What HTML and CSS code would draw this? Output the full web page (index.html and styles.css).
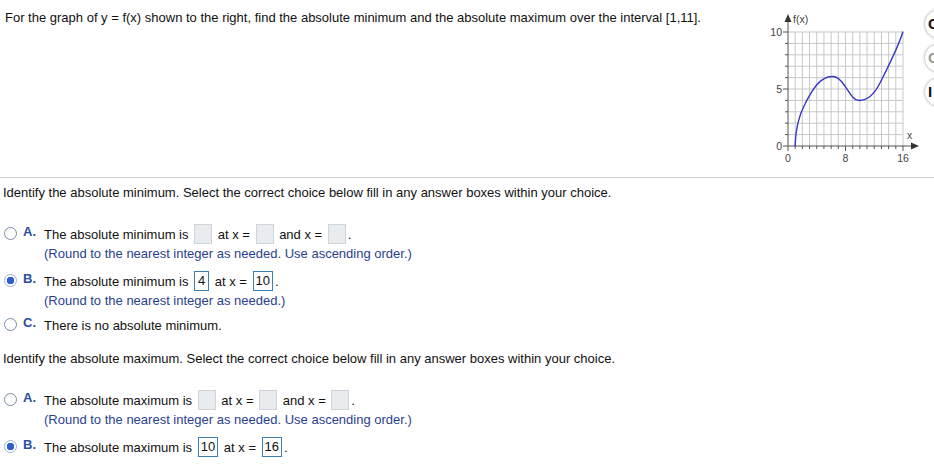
FILE: index.html
```html
<!DOCTYPE html>
<html>
<head>
<meta charset="utf-8">
<link rel="stylesheet" href="styles.css">
</head>
<body>
<div class="top">
  <p class="question">For the graph of y = f(x) shown to the right, find the absolute minimum and the absolute maximum over the interval [1,11].</p>
  <svg class="graph" width="160" height="160" viewBox="760 8 160 160">
    <g stroke="#c8c8c8" stroke-width="1">
      <line x1="795.19" y1="32" x2="795.19" y2="146"/>
      <line x1="802.38" y1="32" x2="802.38" y2="146"/>
      <line x1="809.56" y1="32" x2="809.56" y2="146"/>
      <line x1="816.75" y1="32" x2="816.75" y2="146"/>
      <line x1="823.94" y1="32" x2="823.94" y2="146"/>
      <line x1="831.13" y1="32" x2="831.13" y2="146"/>
      <line x1="838.31" y1="32" x2="838.31" y2="146"/>
      <line x1="845.5" y1="32" x2="845.5" y2="146"/>
      <line x1="852.69" y1="32" x2="852.69" y2="146"/>
      <line x1="859.88" y1="32" x2="859.88" y2="146"/>
      <line x1="867.06" y1="32" x2="867.06" y2="146"/>
      <line x1="874.25" y1="32" x2="874.25" y2="146"/>
      <line x1="881.44" y1="32" x2="881.44" y2="146"/>
      <line x1="888.63" y1="32" x2="888.63" y2="146"/>
      <line x1="895.81" y1="32" x2="895.81" y2="146"/>
      <line x1="903" y1="32" x2="903" y2="146"/>
      <line x1="788" y1="32" x2="903" y2="32"/>
      <line x1="788" y1="43.4" x2="903" y2="43.4"/>
      <line x1="788" y1="54.8" x2="903" y2="54.8"/>
      <line x1="788" y1="66.2" x2="903" y2="66.2"/>
      <line x1="788" y1="77.6" x2="903" y2="77.6"/>
      <line x1="788" y1="89" x2="903" y2="89"/>
      <line x1="788" y1="100.4" x2="903" y2="100.4"/>
      <line x1="788" y1="111.8" x2="903" y2="111.8"/>
      <line x1="788" y1="123.2" x2="903" y2="123.2"/>
      <line x1="788" y1="134.6" x2="903" y2="134.6"/>
    </g>
    <g stroke="#555" stroke-width="1">
      <line x1="788" y1="20" x2="788" y2="146"/>
      <line x1="788" y1="146" x2="912" y2="146"/>
      <line x1="783" y1="32" x2="788" y2="32"/>
      <line x1="783" y1="89" x2="788" y2="89"/>
      <line x1="783" y1="146" x2="788" y2="146"/>
      <line x1="785" y1="43.4" x2="788" y2="43.4"/>
      <line x1="785" y1="54.8" x2="788" y2="54.8"/>
      <line x1="785" y1="66.2" x2="788" y2="66.2"/>
      <line x1="785" y1="77.6" x2="788" y2="77.6"/>
      <line x1="785" y1="100.4" x2="788" y2="100.4"/>
      <line x1="785" y1="111.8" x2="788" y2="111.8"/>
      <line x1="785" y1="123.2" x2="788" y2="123.2"/>
      <line x1="785" y1="134.6" x2="788" y2="134.6"/>
      <line x1="788" y1="146" x2="788" y2="151"/>
      <line x1="795.19" y1="146" x2="795.19" y2="149"/>
      <line x1="802.38" y1="146" x2="802.38" y2="149"/>
      <line x1="809.56" y1="146" x2="809.56" y2="149"/>
      <line x1="816.75" y1="146" x2="816.75" y2="149"/>
      <line x1="823.94" y1="146" x2="823.94" y2="149"/>
      <line x1="831.13" y1="146" x2="831.13" y2="149"/>
      <line x1="838.31" y1="146" x2="838.31" y2="149"/>
      <line x1="845.5" y1="146" x2="845.5" y2="151"/>
      <line x1="852.69" y1="146" x2="852.69" y2="149"/>
      <line x1="859.88" y1="146" x2="859.88" y2="149"/>
      <line x1="867.06" y1="146" x2="867.06" y2="149"/>
      <line x1="874.25" y1="146" x2="874.25" y2="149"/>
      <line x1="881.44" y1="146" x2="881.44" y2="149"/>
      <line x1="888.63" y1="146" x2="888.63" y2="149"/>
      <line x1="895.81" y1="146" x2="895.81" y2="149"/>
      <line x1="903" y1="146" x2="903" y2="151"/>
    </g>
    <path d="M788,14 L784.5,22 L791.5,22 Z" fill="#333"/>
    <path d="M919,146 L911,142.5 L911,149.5 Z" fill="#333"/>
    <path d="M795,146.5 C795.5,130 799,115 805,104 C812,90 820,76.5 832,76.5 C845,76.5 849,100.5 859,100.5 C867,100.5 874,95 880,83 C886,71 898,48 903,31.5" fill="none" stroke="#3535c8" stroke-width="1.4"/>
    <g class="lbl" font-size="10.5" fill="#444">
      <text x="793" y="23">f(x)</text>
      <text x="782" y="36" text-anchor="end">10</text>
      <text x="782" y="93" text-anchor="end">5</text>
      <text x="782" y="150" text-anchor="end">0</text>
      <text x="788" y="162" text-anchor="middle">0</text>
      <text x="845.5" y="162" text-anchor="middle">8</text>
      <text x="903" y="162" text-anchor="middle">16</text>
      <text x="907" y="139">x</text>
    </g>
  </svg>
  <div class="tools">
    <span class="tool dark">C</span>
    <span class="tool light">C</span>
    <span class="tool dark">I</span>
  </div>
</div>

<div class="part">
  <p class="prompt">Identify the absolute minimum. Select the correct choice below fill in any answer boxes within your choice.</p>
  <div class="choice">
    <span class="radio"></span><span class="letter">A.</span>
    <div class="body">
      <div class="line">The absolute minimum is <span class="box empty"></span> at x = <span class="box empty"></span> and x = <span class="box empty"></span>.</div>
      <div class="hint">(Round to the nearest integer as needed. Use ascending order.)</div>
    </div>
  </div>
  <div class="choice">
    <span class="radio on"></span><span class="letter">B.</span>
    <div class="body">
      <div class="line">The absolute minimum is <span class="box filled">4</span> at x = <span class="box filled">10</span>.</div>
      <div class="hint">(Round to the nearest integer as needed.)</div>
    </div>
  </div>
  <div class="choice plain">
    <span class="radio"></span><span class="letter">C.</span>
    <div class="body">
      <div class="line">There is no absolute minimum.</div>
    </div>
  </div>
</div>

<div class="part second">
  <p class="prompt">Identify the absolute maximum. Select the correct choice below fill in any answer boxes within your choice.</p>
  <div class="choice">
    <span class="radio"></span><span class="letter">A.</span>
    <div class="body">
      <div class="line">The absolute maximum is <span class="box empty"></span> at x = <span class="box empty"></span> and x = <span class="box empty"></span>.</div>
      <div class="hint">(Round to the nearest integer as needed. Use ascending order.)</div>
    </div>
  </div>
  <div class="choice">
    <span class="radio on"></span><span class="letter">B.</span>
    <div class="body">
      <div class="line">The absolute maximum is <span class="box filled">10</span> at x = <span class="box filled">16</span>.</div>
    </div>
  </div>
</div>
</body>
</html>
```

FILE: styles.css
```css
html, body {
  margin: 0;
  padding: 0;
  background: #fff;
  overflow: hidden;
}
body {
  font-family: "Liberation Sans", Arial, sans-serif;
  font-size: 13px;
  line-height: 19px;
  color: #111;
  width: 934px;
  height: 470px;
  position: relative;
}
p { margin: 0; }
.top {
  display: flex;
  justify-content: space-between;
  align-items: flex-start;
  height: 178px;
  border-bottom: 1px solid #cfd3d8;
  box-sizing: border-box;
}
.question {
  padding: 8px 0 0 5px;
}
.graph {
  display: block;
  margin-top: 8px;
  margin-right: 14px;
  flex: none;
}
.lbl {
  font-family: "Liberation Sans", Arial, sans-serif;
}
.tools {
  position: absolute;
  left: 925px;
  top: 10px;
  display: flex;
  flex-direction: column;
  gap: 6px;
}
.tool {
  width: 28px;
  height: 28px;
  border-radius: 50%;
  background: #fff;
  box-shadow: 0 0 3px rgba(0,0,0,0.45);
  font-size: 15px;
  font-weight: bold;
  line-height: 28px;
  padding-left: 3px;
  box-sizing: border-box;
}
.tool.dark { color: #111; }
.tool.light { color: #999; }
.part {
  padding: 5px 0 0 3px;
}
.prompt {
  margin-bottom: 23px;
}
.part.second { padding-top: 5px; }
.choice {
  display: flex;
  align-items: flex-start;
  margin-bottom: 9px;
}
.choice.plain { margin-top: -3px; }
.radio {
  width: 13px;
  height: 13px;
  border: 1px solid #7a8aa8;
  border-radius: 50%;
  box-sizing: border-box;
  margin: 2px 0 0 1px;
  flex: none;
  background: #fff;
}
.radio.on {
  border: 1.5px solid #9bb0e0;
  background: radial-gradient(circle, #2f5bd3 0 3.5px, #fff 4px);
}
.letter {
  width: 21px;
  padding-left: 6px;
  flex: none;
  font-weight: bold;
  color: #2a4ea3;
  font-size: 13px;
  line-height: 14px;
}
.line {
  line-height: 19px;
}
.hint {
  color: #2a3f8f;
  line-height: 19px;
}
.box {
  display: inline-block;
  vertical-align: middle;
  height: 20px;
  box-sizing: border-box;
  margin: -3px 2px 0 2px;
  text-align: center;
  line-height: 18px;
}
.box.empty {
  width: 18px;
  background: #e9ecef;
  border: 1px solid #cfd5db;
}
.box.filled {
  min-width: 15px;
  padding: 0 2px;
  background: #fff;
  border: 1px solid #3d7fae;
}
```
